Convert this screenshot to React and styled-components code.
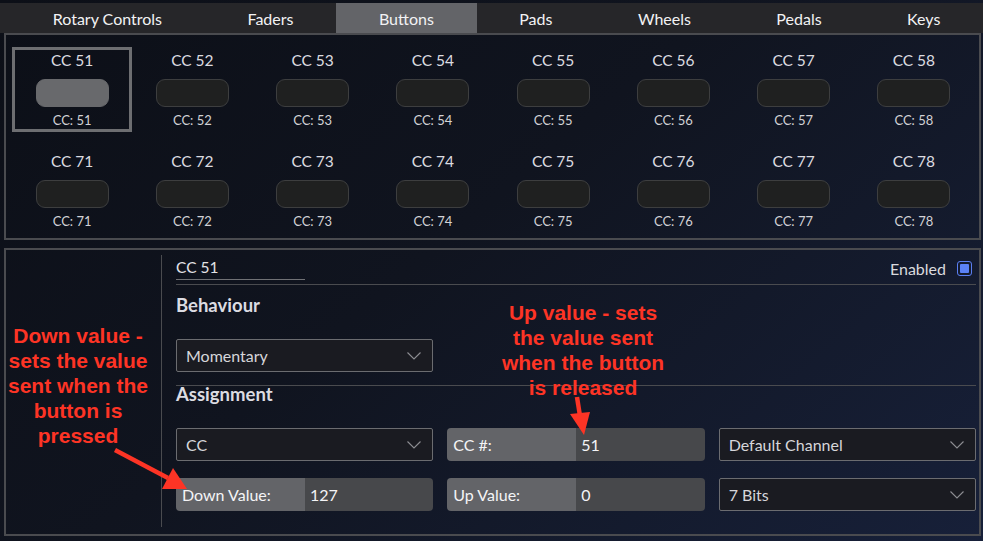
import React, { useState } from 'react'
import styled, { createGlobalStyle } from 'styled-components'

const TABS = ['Rotary Controls', 'Faders', 'Buttons', 'Pads', 'Wheels', 'Pedals', 'Keys']
const CONTROLS = [51, 52, 53, 54, 55, 56, 57, 58, 71, 72, 73, 74, 75, 76, 77, 78]

const Chevron = () => (
  <svg width="14" height="8" viewBox="0 0 14 8">
    <path d="M0.5 0.5 L7 7 L13.5 0.5" fill="none" stroke="#8d8e93" strokeWidth="1.1" />
  </svg>
)

const Select = ({ value }) => (
  <Dropdown>
    <span>{value}</span>
    <Chevron />
  </Dropdown>
)

const Field = ({ label, value }) => (
  <FieldBox>
    <FieldLabel>{label}</FieldLabel>
    <FieldValue>{value}</FieldValue>
  </FieldBox>
)

const App = () => {
  const [tab, setTab] = useState('Buttons')
  const [selected, setSelected] = useState(51)
  const [enabled, setEnabled] = useState(true)

  return (
    <>
      <GlobalStyle />
      <Page>
        <TabBar>
          {TABS.map(t => (
            <Tab key={t} active={t === tab} onClick={() => setTab(t)}>
              {t}
            </Tab>
          ))}
        </TabBar>

        <GridPanel>
          {CONTROLS.map(cc => (
            <Cell key={cc} selected={cc === selected} onClick={() => setSelected(cc)}>
              <CellTitle>CC {cc}</CellTitle>
              <Pill selected={cc === selected} />
              <CellLabel>CC: {cc}</CellLabel>
            </Cell>
          ))}
        </GridPanel>

        <EditorPanel>
          <Sidebar />
          <Editor>
            <HeaderRow>
              <NameField>CC {selected}</NameField>
              <EnabledGroup onClick={() => setEnabled(e => !e)}>
                Enabled
                <Checkbox>{enabled && <CheckMark />}</Checkbox>
              </EnabledGroup>
            </HeaderRow>

            <SectionTitle>Behaviour</SectionTitle>
            <BehaviourSelect>
              <Select value="Momentary" />
            </BehaviourSelect>

            <Separator />
            <SectionTitle flush>Assignment</SectionTitle>

            <FieldGrid>
              <Select value="CC" />
              <Field label="CC #:" value={selected} />
              <Select value="Default Channel" />
              <Field label="Down Value:" value="127" />
              <Field label="Up Value:" value="0" />
              <Select value="7 Bits" />
            </FieldGrid>
          </Editor>
        </EditorPanel>

        {/* red call-outs drawn over the screenshot */}
        <Note left={0} top={323} width={156}>
          Down value -<br />
          sets the value<br />
          sent when the<br />
          button is<br />
          pressed
        </Note>
        <Arrow left={105} top={440} width={90} height={56}>
          <line x1="10" y1="10" x2="63" y2="38" stroke="#fd3425" strokeWidth="4.5" />
          <polygon points="57,49 68,28 82,49" fill="#fd3425" />
        </Arrow>

        <Note left={483} top={300} width={200}>
          Up value - sets<br />
          the value sent<br />
          when the button<br />
          is released
        </Note>
        <Arrow left={560} top={390} width={40} height={50}>
          <line x1="17" y1="7" x2="20" y2="26" stroke="#fd3425" strokeWidth="4.5" />
          <polygon points="10,24 30,22 24,45" fill="#fd3425" />
        </Arrow>
      </Page>
    </>
  )
}

export default App

// <------------ css ------------> //

const GlobalStyle = createGlobalStyle`
  body {
    margin: 0;
    background: #0f121b;
    font-family: Lato, "Open Sans", sans-serif;
  }
`

const Page = styled.div`
  position: relative;
  width: 983px;
  height: 541px;
  box-sizing: border-box;
  padding-top: 3px;
  overflow: hidden;
  background: linear-gradient(140deg, #0c0f17 0%, #10141f 45%, #172039 100%);
`

const TabBar = styled.div`
  display: flex;
  height: 30px;
  background: #262629;
`

const Tab = styled.div`
  flex: 1 1 auto;
  display: flex;
  align-items: center;
  justify-content: center;
  font-size: 16px;
  color: #f2f2f4;
  cursor: pointer;
  background: ${p => (p.active ? '#636468' : 'transparent')};
  &:first-child {
    padding-left: 10px;
  }
`

const GridPanel = styled.div`
  display: grid;
  grid-template-columns: repeat(8, 1fr);
  grid-template-rows: 85px 85px;
  row-gap: 16px;
  height: 207px;
  box-sizing: border-box;
  margin: 0 2px 0 4px;
  padding: 12px 5px 0 6px;
  border: 2px solid #4a4b4f;
`

const Cell = styled.div`
  display: flex;
  flex-direction: column;
  align-items: center;
  box-sizing: border-box;
  border: 3px solid ${p => (p.selected ? '#6d6e71' : 'transparent')};
  cursor: pointer;
`

const CellTitle = styled.div`
  padding-top: 1px;
  font-size: 15.5px;
  line-height: 18px;
  color: #dcdce0;
`

const Pill = styled.div`
  width: 73px;
  height: 28px;
  margin-top: 10px;
  box-sizing: border-box;
  border-radius: 9px;
  background: ${p => (p.selected ? '#68696c' : '#1f2020')};
  border: 1.5px solid ${p => (p.selected ? '#68696c' : '#3d3e3f')};
`

const CellLabel = styled.div`
  margin-top: 5px;
  font-size: 13px;
  line-height: 16px;
  color: #d2d2d6;
`

const EditorPanel = styled.div`
  display: flex;
  height: 288px;
  box-sizing: border-box;
  margin: 8px 2px 0 4px;
  border: 2px solid #4a4b4f;
`

const Sidebar = styled.div`
  width: 155px;
  margin: 5px 0 7px;
  border-right: 1px solid #4a4b4f;
`

const Editor = styled.div`
  flex: 1;
  display: flex;
  flex-direction: column;
  padding: 0 3px 0 14px;
`

const HeaderRow = styled.div`
  display: flex;
  justify-content: space-between;
  align-items: flex-end;
  height: 35px;
  box-sizing: border-box;
  border-bottom: 1px solid #4a4b4f;
`

const NameField = styled.div`
  width: 129px;
  margin-bottom: 4px;
  padding-bottom: 3px;
  border-bottom: 1px solid #707175;
  font-size: 15.5px;
  line-height: 18px;
  color: #e2e2e6;
`

const EnabledGroup = styled.div`
  display: flex;
  align-items: center;
  gap: 11px;
  margin: 0 4px 6px 0;
  font-size: 16px;
  color: #dadade;
  cursor: pointer;
`

const Checkbox = styled.div`
  display: flex;
  align-items: center;
  justify-content: center;
  width: 15px;
  height: 15px;
  box-sizing: border-box;
  border: 1.5px solid #5a7ef2;
  border-radius: 3px;
`

const CheckMark = styled.div`
  width: 9px;
  height: 9px;
  border-radius: 1px;
  background: #5b82f7;
`

const SectionTitle = styled.div`
  margin-top: ${p => (p.flush ? '0' : '10px')};
  font-size: 18.5px;
  font-weight: 700;
  line-height: ${p => (p.flush ? '16px' : '20px')};
  color: #dcdce2;
`

const BehaviourSelect = styled.div`
  width: 257px;
  margin-top: 24px;
`

const Separator = styled.div`
  height: 1px;
  margin-top: 13px;
  background: #4a4b4f;
`

const FieldGrid = styled.div`
  display: grid;
  grid-template-columns: repeat(3, 1fr);
  grid-auto-rows: 33px;
  column-gap: 14px;
  row-gap: 17px;
  margin-top: 26px;
`

const Dropdown = styled.div`
  display: flex;
  align-items: center;
  justify-content: space-between;
  height: 33px;
  box-sizing: border-box;
  padding: 0 11px 0 9px;
  background: #1a1b21;
  border: 1px solid #6b6c70;
  border-radius: 2px;
  font-size: 16px;
  color: #d6d6da;
`

const FieldBox = styled.div`
  display: flex;
  height: 33px;
  border-radius: 4px;
  overflow: hidden;
  font-size: 16px;
  color: #f4f4f6;
`

const FieldLabel = styled.div`
  display: flex;
  align-items: center;
  width: 129px;
  padding-left: 6px;
  box-sizing: border-box;
  background: #636468;
`

const FieldValue = styled.div`
  flex: 1;
  display: flex;
  align-items: center;
  padding-left: 5px;
  background: #47484b;
`

const Note = styled.div`
  position: absolute;
  left: ${p => p.left}px;
  top: ${p => p.top}px;
  width: ${p => p.width}px;
  text-align: center;
  font-family: "Liberation Sans", Arial, sans-serif;
  font-weight: 700;
  font-size: 21px;
  line-height: 25px;
  color: #fd3425;
  pointer-events: none;
`

const Arrow = styled.svg.attrs(p => ({
  viewBox: `0 0 ${p.width} ${p.height}`,
}))`
  position: absolute;
  left: ${p => p.left}px;
  top: ${p => p.top}px;
  width: ${p => p.width}px;
  height: ${p => p.height}px;
  pointer-events: none;
`
